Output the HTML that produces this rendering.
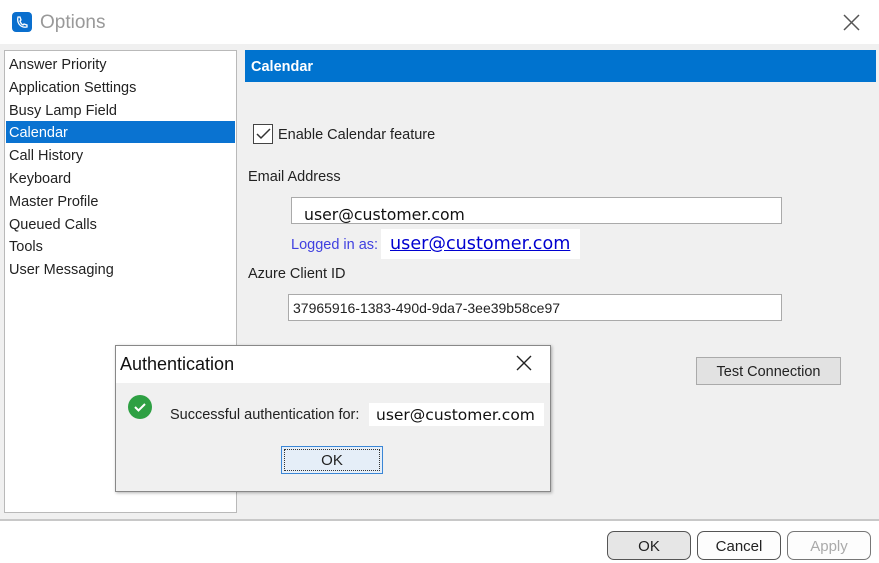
<!DOCTYPE html>
<html><head><style>
body{margin:0;width:879px;height:563px;background:#fff;font-family:"Liberation Sans",sans-serif;position:relative;overflow:hidden;color:#222}
div{position:absolute;box-sizing:border-box}
.t{font-size:14.5px;white-space:nowrap}
.btn{border:1px solid #555;border-radius:7px;background:#fdfdfd;font-size:15px;text-align:center;line-height:29px}
</style></head><body>
<div style="left:12px;top:12px;width:20px;height:20px;background:#0a6fce;border-radius:4px"></div>
<svg style="position:absolute;left:14px;top:14px" width="16" height="16" viewBox="0 0 16 16"><path d="M4 3 L6 3 L7 6 L6 7 Q7 10 9 11 L10 10 L13 11 L13 13 Q8 14 5 10 Q3 7 4 3Z" fill="none" stroke="#fff" stroke-width="1.3"/></svg>
<div class="t" style="left:40px;top:12px;font-size:19px;color:#999">Options</div>
<svg style="position:absolute;left:843px;top:14px" width="17" height="17"><path d="M1 1L16 16M16 1L1 16" stroke="#555" stroke-width="1.5"/></svg>
<div style="left:0;top:44px;width:879px;height:477px;background:#f0f0f0;border-bottom:2px solid #c8c8c8"></div>
<div style="left:4px;top:50px;width:233px;height:463px;background:#fff;border:1px solid #b9b9b9"></div>
<div style="left:6px;top:121px;width:229px;height:22px;background:#0a73d1"></div>
<div class="t" style="left:9px;top:54px;line-height:22.8px;color:#222">Answer Priority<br>Application Settings<br>Busy Lamp Field<br><span style="color:#fff">Calendar</span><br>Call History<br>Keyboard<br>Master Profile<br>Queued Calls<br>Tools<br>User Messaging</div>
<div style="left:245px;top:50px;width:631px;height:32px;background:#0073cf"></div>
<div class="t" style="left:251px;top:59px;color:#fff;font-weight:bold">Calendar</div>
<div style="left:253px;top:124px;width:20px;height:20px;border:1.5px solid #444;background:#fff"></div>
<svg style="position:absolute;left:256px;top:127px" width="15" height="14"><path d="M1 7L5 11L14 2" fill="none" stroke="#333" stroke-width="1.5"/></svg>
<div class="t" style="left:278px;top:127px">Enable Calendar feature</div>
<div class="t" style="left:248px;top:169px">Email Address</div>
<div style="left:291px;top:197px;width:491px;height:27px;background:#fff;border:1px solid #aaa"></div>
<div class="t" style="left:304px;top:205px;font-family:'DejaVu Sans';font-size:15.7px;color:#111">user@customer.com</div>
<div class="t" style="left:291px;top:237px;color:#4040e0">Logged in as:</div>
<div style="left:381px;top:229px;width:199px;height:30px;background:#fff"></div>
<div class="t" style="left:390px;top:234px;font-family:'DejaVu Sans';font-size:17.6px;color:#0000d0;text-decoration:underline">user@customer.com</div>
<div class="t" style="left:248px;top:266px">Azure Client ID</div>
<div style="left:288px;top:294px;width:494px;height:27px;background:#fff;border:1px solid #aaa"></div>
<div class="t" style="left:293px;top:300px;font-size:14px">37965916-1383-490d-9da7-3ee39b58ce97</div>
<div style="left:696px;top:357px;width:145px;height:28px;border:1px solid #aaa;background:#e2e2e2;font-size:14.5px;text-align:center;line-height:28px">Test Connection</div>
<div style="left:115px;top:345px;width:436px;height:147px;background:#f0f0f0;border:1px solid #888;box-shadow:1px 1px 3px rgba(0,0,0,.3)"></div>
<div style="left:116px;top:346px;width:434px;height:37px;background:#fff"></div>
<div class="t" style="left:120px;top:354px;font-size:18px;color:#111">Authentication</div>
<svg style="position:absolute;left:516px;top:355px" width="16" height="16"><path d="M1 1L15 15M15 1L1 15" stroke="#222" stroke-width="1.4"/></svg>
<div style="left:128px;top:395px;width:24px;height:24px;border-radius:50%;background:#2ea043"></div>
<svg style="position:absolute;left:128px;top:395px" width="24" height="24"><path d="M7 12L10.5 15.5L17 9" fill="none" stroke="#fff" stroke-width="2"/></svg>
<div class="t" style="left:170px;top:407px">Successful authentication for:</div>
<div style="left:369px;top:403px;width:175px;height:23px;background:#fff"></div>
<div class="t" style="left:376px;top:406px;font-family:'DejaVu Sans';font-size:15.5px;color:#111">user@customer.com</div>
<div style="left:281px;top:446px;width:102px;height:28px;border:1px solid #3a86d6;background:#e5eef8;outline:1px dotted #333;outline-offset:-4px;font-size:15px;text-align:center;line-height:28px">OK</div>
<div class="btn" style="left:607px;top:531px;width:84px;height:29px;background:#e6e6e6">OK</div>
<div class="btn" style="left:697px;top:531px;width:84px;height:29px">Cancel</div>
<div class="btn" style="left:787px;top:531px;width:84px;height:29px;color:#aaa;border-color:#777">Apply</div>
</body></html>
